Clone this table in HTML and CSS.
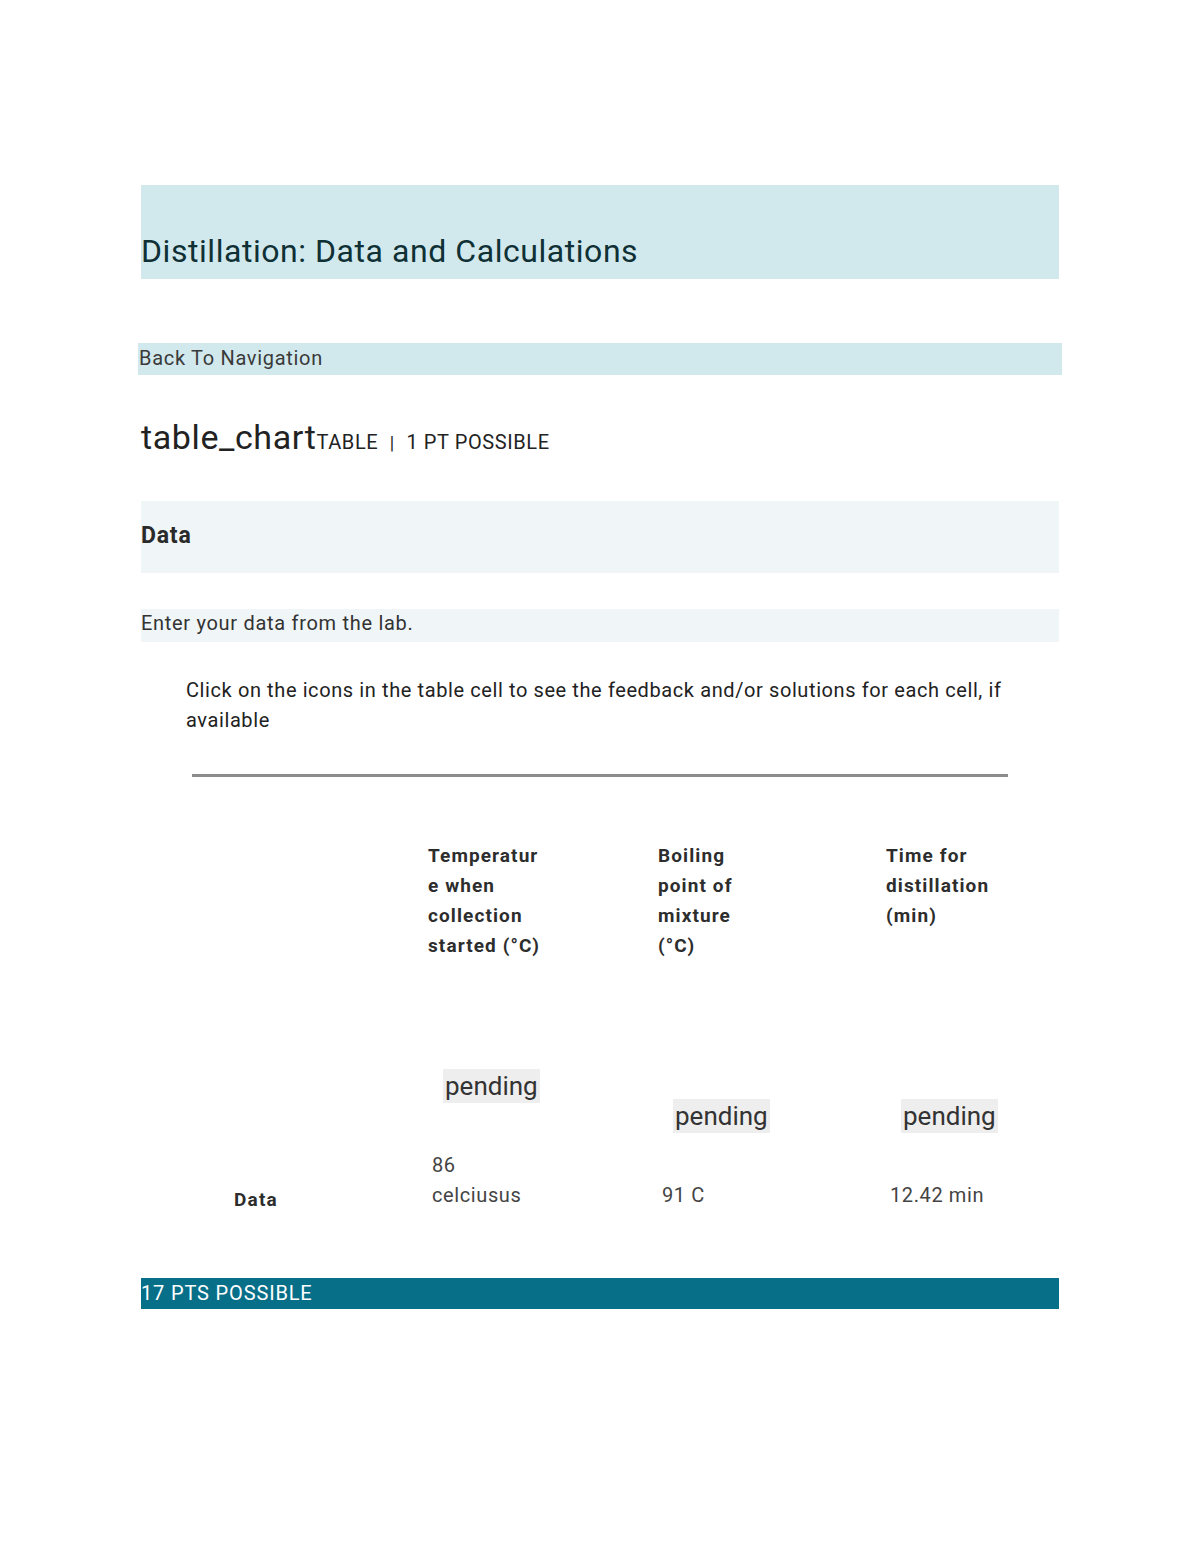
FILE: index.html
```html
<!DOCTYPE html>
<html>
<head>
<meta charset="utf-8">
<link rel="stylesheet" href="styles.css">
</head>
<body>
<main class="page">
  <header class="title-band">
    <h1 class="title">Distillation: Data and Calculations</h1>
  </header>
  <div class="back-nav">Back To Navigation</div>
  <div class="kind-line"><span class="kind-icon">table_chart</span><span class="kind-meta">TABLE <span class="sep">|</span> 1 PT POSSIBLE</span></div>
  <section class="data-box"><h2 class="data-title">Data</h2></section>
  <div class="enter-box">Enter your data from the lab.</div>
  <p class="instructions">Click on the icons in the table cell to see the feedback and/or solutions for each cell, if available</p>
  <hr class="rule">
  <div class="grid">
    <div class="head-cell"></div>
    <div class="head-cell"><span class="head-text">Temperature when collection started (°C)</span></div>
    <div class="head-cell"><span class="head-text">Boiling point of mixture (°C)</span></div>
    <div class="head-cell"><span class="head-text">Time for distillation (min)</span></div>

    <div class="row-label">Data</div>
    <div class="cell"><span class="pending">pending</span><span class="value">86<br>celciusus</span></div>
    <div class="cell"><span class="pending">pending</span><span class="value">91 C</span></div>
    <div class="cell"><span class="pending">pending</span><span class="value">12.42 min</span></div>
  </div>
  <div class="pts-bar">17 PTS POSSIBLE</div>
</main>
</body>
</html>
```
FILE: styles.css
```css
html, body {
  margin: 0;
  padding: 0;
  background: #ffffff;
}
body {
  font-family: Roboto, "Liberation Sans", sans-serif;
  color: #333333;
}
.page {
  width: 918px;
  margin: 0 0 0 141px;
  padding-top: 185px;
  padding-bottom: 244px;
}
.title-band {
  height: 94px;
  background: #d1e9ed;
  display: flex;
  align-items: flex-end;
  padding-bottom: 9px;
  box-sizing: border-box;
}
.title {
  margin: 0;
  font-size: 32px;
  font-weight: 400;
  line-height: 38px;
  letter-spacing: 0.55px;
  color: #0f3035;
}
.back-nav {
  margin: 64px -3px 0 -3px;
  height: 32px;
  line-height: 30px;
  background: #d1e9ed;
  font-size: 20px;
  letter-spacing: 0.7px;
  color: #3a3a3a;
  padding-left: 1px;
}
.kind-line {
  margin-top: 42px;
  height: 40px;
  display: flex;
  align-items: baseline;
  color: #222;
}
.kind-icon {
  font-size: 34px;
  line-height: 40px;
  letter-spacing: 0.6px;
}
.kind-meta {
  font-size: 20px;
  letter-spacing: 0.6px;
  text-transform: uppercase;
}
.sep {
  font-size: 18px;
  color: #222;
  margin: 0 6px 0 6px;
}
.data-box {
  margin-top: 44px;
  height: 72px;
  background: #f0f5f7;
  display: flex;
  align-items: center;
}
.data-title {
  margin: 0;
  font-size: 23px;
  font-weight: 700;
  letter-spacing: 0.8px;
  color: #2a2a2a;
  padding-bottom: 3px;
}
.enter-box {
  margin-top: 36px;
  height: 33px;
  line-height: 29px;
  background: #f0f5f7;
  font-size: 20px;
  letter-spacing: 0.7px;
  color: #333;
}
.instructions {
  margin: 33px 44px 0 45px;
  font-size: 20px;
  line-height: 30px;
  letter-spacing: 0.6px;
  color: #222;
}
.rule {
  margin: 39px 51px 0 51px;
  border: 0;
  height: 3px;
  background: #8c8c8c;
}
.grid {
  display: grid;
  grid-template-columns: 287px 230px 228px 173px;
  align-items: end;
  margin-top: 64px;
}
.head-cell {
  align-self: start;
  font-size: 19px;
  font-weight: 700;
  line-height: 30px;
  letter-spacing: 1.1px;
  color: #2d2d2d;
}
.head-text {
  display: block;
  width: 116px;
  overflow-wrap: anywhere;
}
.row-label {
  padding-left: 93px;
  font-size: 19px;
  font-weight: 700;
  line-height: 30px;
  letter-spacing: 1.2px;
  color: #2d2d2d;
  margin-bottom: -5px;
}
.cell {
  display: flex;
  flex-direction: column;
  align-items: flex-start;
  margin-top: 108px;
}
.pending {
  margin-left: 15px;
  padding: 0 2px;
  background: #eeeeee;
  font-size: 26px;
  line-height: 34px;
  color: #333;
}
.value {
  margin-top: 47px;
  padding-left: 4px;
  font-size: 20px;
  line-height: 30px;
  letter-spacing: 0.6px;
  color: #444;
}
.pts-bar {
  margin-top: 68px;
  height: 31px;
  line-height: 31px;
  background: #086f89;
  color: #ffffff;
  font-size: 20px;
  letter-spacing: 0.85px;
}
```
